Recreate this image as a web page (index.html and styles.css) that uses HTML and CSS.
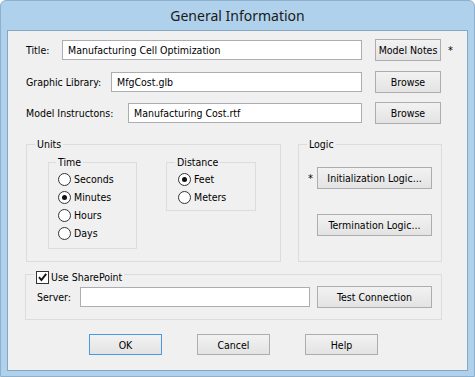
FILE: index.html
```html
<!DOCTYPE html>
<html>
<head>
<meta charset="utf-8">
<title>General Information</title>
<link rel="stylesheet" href="styles.css">
</head>
<body>
<div class="window">
  <div class="titlebar">General Information</div>
  <div class="client">
    <div class="field-row first">
      <span class="lbl">Title:</span>
      <div class="input w-title">Manufacturing Cell Optimization</div>
      <button class="btn side">Model Notes</button>
      <span class="star">*</span>
    </div>
    <div class="field-row second">
      <span class="lbl">Graphic Library:</span>
      <div class="input w-lib">MfgCost.glb</div>
      <button class="btn side">Browse</button>
    </div>
    <div class="field-row third">
      <span class="lbl">Model Instructons:</span>
      <div class="input w-instr">Manufacturing Cost.rtf</div>
      <button class="btn side">Browse</button>
    </div>

    <div class="groups">
      <div class="group units">
        <span class="caption">Units</span>
        <div class="subgroup time">
          <span class="caption sub">Time</span>
          <div class="radio"><span class="dot"></span>Seconds</div>
          <div class="radio"><span class="dot on"></span>Minutes</div>
          <div class="radio"><span class="dot"></span>Hours</div>
          <div class="radio"><span class="dot"></span>Days</div>
        </div>
        <div class="subgroup distance">
          <span class="caption sub">Distance</span>
          <div class="radio"><span class="dot on"></span>Feet</div>
          <div class="radio"><span class="dot"></span>Meters</div>
        </div>
      </div>
      <div class="group logic">
        <span class="caption">Logic</span>
        <div class="logic-row">
          <span class="star logic-star">*</span>
          <button class="btn wide">Initialization Logic...</button>
        </div>
        <div class="logic-row term">
          <span class="star logic-star"></span>
          <button class="btn wide">Termination Logic...</button>
        </div>
      </div>
    </div>

    <div class="group sharepoint">
      <span class="caption check-caption">
        <span class="checkbox"><svg width="11" height="11" viewBox="0 0 11 11"><path d="M2 5.2 L4.4 8 L9.2 1.8" fill="none" stroke="#111" stroke-width="1.9"/></svg></span>Use SharePoint
      </span>
      <div class="server-row">
        <span class="server-lbl">Server:</span>
        <div class="input w-server"></div>
        <button class="btn wide">Test Connection</button>
      </div>
    </div>

    <div class="actions">
      <button class="btn action default">OK</button>
      <button class="btn action">Cancel</button>
      <button class="btn action">Help</button>
    </div>
  </div>
</div>
</body>
</html>
```

FILE: styles.css
```css
* { box-sizing: border-box; }

html, body {
  margin: 0;
  padding: 0;
  background: #ffffff;
}

body {
  font-family: "DejaVu Sans Condensed", "DejaVu Sans", sans-serif;
  font-stretch: condensed;
  font-size: 10.5px;
  color: #000;
}

.window {
  width: 475px;
  height: 377px;
  background: #afd1eb;
  border: 1px solid #8fb0cc;
  border-radius: 6px 6px 0 0;
  padding: 0 6px;
}

.titlebar {
  height: 29px;
  line-height: 29px;
  text-align: center;
  font-family: "Noto Sans", "Open Sans", sans-serif;
  font-stretch: normal;
  font-size: 14px;
  color: #1a1a1a;
}

.client {
  height: 341px;
  background: #f0f0f0;
  border: 1px solid #86a7c4;
  padding-top: 8px;
}

.field-row {
  display: flex;
  align-items: center;
  height: 22px;
  padding-left: 18px;
}

.field-row.second { margin-top: 10px; }
.field-row.third { margin-top: 9px; }

.lbl {
  flex: 1;
  white-space: nowrap;
}

.input {
  height: 20px;
  line-height: 18px;
  background: #fff;
  border: 1px solid #abadb3;
  padding-left: 5px;
  white-space: nowrap;
  overflow: hidden;
}

.w-title { width: 300px; }
.w-lib { width: 251px; }
.w-instr { width: 234px; }
.w-server { width: 230px; }

.btn {
  font: inherit;
  color: #000;
  height: 22px;
  padding: 0;
  border: 1px solid #adadad;
  background: linear-gradient(#f2f2f2, #e3e3e3);
  text-align: center;
  white-space: nowrap;
}

.btn.side {
  width: 66px;
  margin-left: 13px;
  margin-right: 26px;
}

.field-row.first .btn.side { margin-right: 0; }

.star {
  display: inline-block;
  width: 9px;
  margin-left: 7px;
  font-size: 11px;
}

.field-row.first .star { width: 19px; }

.groups {
  display: flex;
  margin-top: 20px;
  padding-left: 18px;
  gap: 17px;
}

.group {
  position: relative;
  border: 1px solid #dcdcdc;
}

.caption {
  position: absolute;
  top: -7px;
  left: 8px;
  padding: 0 2px;
  line-height: 13px;
  background: #f0f0f0;
  white-space: nowrap;
}

.caption.sub { left: 7px; }

.units {
  width: 255px;
  height: 118px;
  display: flex;
  align-items: flex-start;
  padding: 17px 0 0 21px;
}

.subgroup {
  position: relative;
  border: 1px solid #dcdcdc;
  padding-top: 7px;
}

.time {
  width: 89px;
  height: 87px;
  padding-left: 9px;
}

.distance {
  width: 90px;
  height: 49px;
  margin-left: 29px;
  padding-left: 11px;
}

.distance .caption.sub { left: 8px; }

.radio {
  display: flex;
  align-items: center;
  height: 18px;
  white-space: nowrap;
}

.dot {
  position: relative;
  width: 13px;
  height: 13px;
  border: 1px solid #333;
  border-radius: 50%;
  background: #fff;
  margin-right: 3px;
  flex: none;
}

.dot.on::after {
  content: "";
  position: absolute;
  left: 3px;
  top: 3px;
  width: 5px;
  height: 5px;
  border-radius: 50%;
  background: #111;
}

.logic {
  width: 144px;
  height: 118px;
  padding: 22px 0 0 9px;
}

.logic-row {
  display: flex;
  align-items: center;
}

.logic-row.term { margin-top: 25px; }

.logic-star {
  margin-left: 0;
}

.btn.wide {
  width: 115px;
}

.sharepoint {
  width: 417px;
  height: 46px;
  margin: 12px 0 0 17px;
  padding: 11px 0 0 11px;
}

.check-caption {
  top: -4px;
  left: 8px;
  display: flex;
  align-items: center;
  line-height: 13px;
}

.checkbox {
  display: inline-flex;
  align-items: center;
  justify-content: center;
  width: 13px;
  height: 13px;
  border: 1px solid #333;
  background: #fff;
  margin-right: 2px;
}

.server-row {
  display: flex;
  align-items: center;
  height: 22px;
}

.server-lbl {
  width: 43px;
}

.server-row .btn.wide {
  margin-left: 7px;
}

.actions {
  display: flex;
  gap: 35px;
  margin-top: 14px;
  padding-left: 81px;
}

.btn.action {
  width: 73px;
  height: 21px;
}

.btn.default {
  border-color: #4a9ae3;
}
```
